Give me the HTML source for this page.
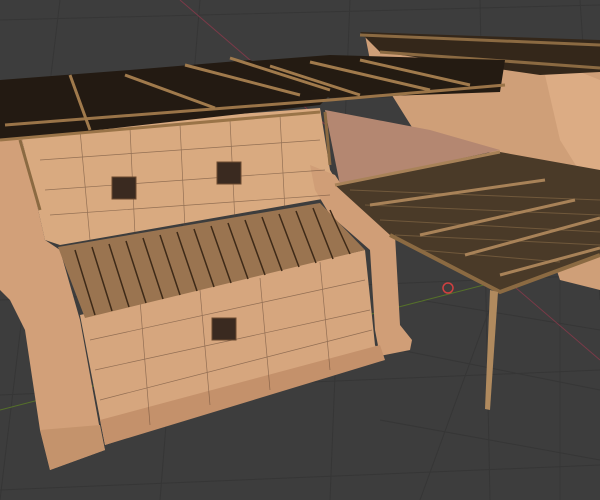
<!DOCTYPE html>
<html><head><style>html,body{margin:0;padding:0;background:#3b3b3b;overflow:hidden}svg{display:block}</style></head>
<body>
<svg width="600" height="500" viewBox="0 0 600 500" xmlns="http://www.w3.org/2000/svg">
<rect width="600" height="500" fill="#3d3d3d"/>
<g stroke="#363636" stroke-width="1" fill="none">
<path d="M0 20 L600 5 M0 110 L600 90 M0 200 L600 180 M0 300 L600 275 M0 395 L600 370 M0 490 L600 465"/>
<path d="M60 0 L0 500 M200 0 L160 500 M350 0 L330 500 M480 0 L490 500 M580 0 L600 300"/>
<path d="M420 300 L600 330 M400 350 L600 390 M380 420 L600 460 M500 280 L420 500 M560 280 L560 500"/>
</g>
<line x1="180" y1="0" x2="600" y2="360" stroke="#7a3a48" stroke-width="1"/>
<line x1="0" y1="410" x2="600" y2="255" stroke="#55702a" stroke-width="1"/>
<!-- far right structure -->
<polygon points="365,35 600,45 600,290 560,280 520,160 480,150 420,140 370,60" fill="#cf9f78"/>
<polygon points="545,75 575,70 600,80 600,175 585,180 560,140" fill="#dcac84"/>
<polygon points="325,110 430,130 500,150 340,185" fill="#b48771"/>
<polygon points="360,32 600,40 600,72 540,75 380,52" fill="#34271a"/>
<path d="M360 35 L600 45 M380 52 L600 68" stroke="#8b6a42" stroke-width="3"/>
<!-- left pillar -->
<polygon points="0,95 20,130 45,240 60,250 80,320 100,430 105,450 50,470 40,430 25,330 10,300 0,290" fill="#d2a079"/>
<polygon points="40,430 100,425 105,450 50,470" fill="#c4936c"/>
<!-- upper wall -->
<polygon points="20,130 320,108 330,170 345,195 60,245 45,240" fill="#d9aa80"/>
<!-- right pillar -->
<polygon points="310,165 335,175 345,190 385,225 395,235 400,325 412,340 410,350 380,356 375,330 370,250 330,215 315,190" fill="#d09e77"/>
<!-- lower wall -->
<polygon points="80,315 365,250 375,345 380,356 105,445" fill="#d6a67e"/>
<polygon points="100,420 380,345 385,360 105,445" fill="#c4916b"/>
<g stroke="#5a4030" stroke-width="0.7" opacity="0.55" fill="none">
<path d="M40 160 L320 140 M45 190 L325 170 M50 215 L330 195 M90 340 L365 280 M95 370 L370 310 M100 400 L372 330"/>
<path d="M80 130 L90 240 M130 128 L135 235 M180 124 L185 228 M230 120 L235 222 M280 115 L285 212 M140 300 L150 425 M200 290 L210 405 M260 278 L270 390 M320 262 L330 370"/>
</g>
<rect x="112" y="177" width="24" height="22" fill="#3a2a20" stroke="#6b4a30"/>
<rect x="217" y="162" width="24" height="22" fill="#3a2a20" stroke="#6b4a30"/>
<rect x="212" y="318" width="24" height="22" fill="#3a2a20" stroke="#6b4a30"/>
<!-- deck -->
<polygon points="58,247 320,203 365,250 85,318" fill="#9a7450"/>
<g stroke="#3e2a18" stroke-width="1.5">
<path d="M75 250 L95 315 M92 247 L112 311 M109 244 L129 307 M126 241 L146 303 M143 238 L163 299 M160 235 L180 295 M177 232 L197 291 M194 229 L214 287 M211 226 L231 283 M228 223 L248 279 M245 220 L265 275 M262 217 L282 271 M279 214 L299 267 M296 211 L316 263 M313 208 L333 259 M330 210 L350 254"/>
</g>
<!-- left roof -->
<polygon points="0,80 130,70 250,60 330,95 320,105 10,140 0,140" fill="#231a12"/>
<polygon points="240,62 330,55 505,60 500,92 330,98" fill="#241b12"/>
<path d="M5 125 L330 100 M0 140 L320 112 M330 100 L505 85" stroke="#9a7448" stroke-width="3"/>
<g stroke="#a07a4c" stroke-width="3">
<path d="M70 75 L90 130 M125 75 L215 108 M185 65 L300 95 M230 58 L330 90 M270 66 L360 95 M310 62 L430 90 M360 60 L470 85"/>
</g>
<path d="M20 140 L40 210 M325 112 L330 165" stroke="#8b6a42" stroke-width="3"/>
<!-- right bamboo roof -->
<polygon points="335,185 500,152 600,170 600,255 500,290 390,235" fill="#4a3a28"/>
<g stroke="#7a6040" stroke-width="1" opacity="0.8">
<path d="M350 190 L600 200 M365 205 L600 215 M380 220 L600 232 M395 235 L600 245 M420 250 L560 262"/>
</g>
<g stroke="#a88258" stroke-width="3">
<path d="M370 205 L545 180 M420 235 L575 200 M465 255 L600 218 M500 275 L600 248 M335 185 L500 152"/>
</g>
<path d="M390 235 L500 292 L600 255" stroke="#8b6a42" stroke-width="4" fill="none"/>
<polygon points="490,290 498,292 490,410 485,409" fill="#b08a5e"/>
<circle cx="448" cy="288" r="5" fill="none" stroke="#d04040" stroke-width="1.5"/>
</svg>
</body></html>
